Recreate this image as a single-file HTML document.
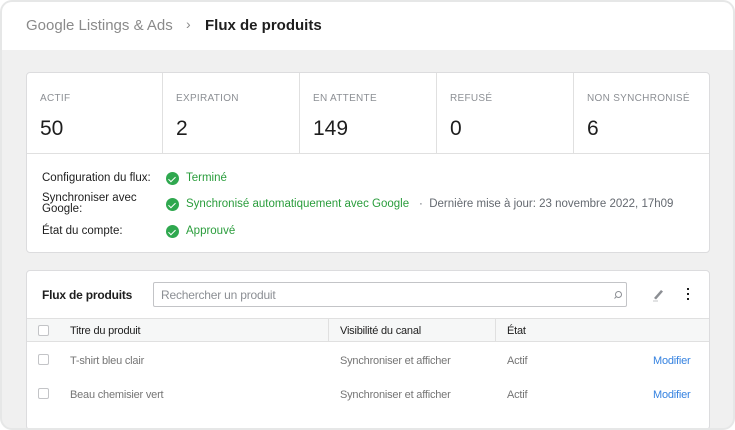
<!DOCTYPE html>
<html><head><meta charset="utf-8"><style>
*{box-sizing:border-box;margin:0;padding:0}
body{width:735px;height:416px;overflow:hidden;background:#fff;font-family:"Liberation Sans",sans-serif;color:#1e1e1e;position:relative}
.frame{position:absolute;left:0;top:0;width:735px;height:430px;border:2px solid #e6e7e7;border-radius:12px;background:#f0f0f0;overflow:hidden}
.hdr{position:absolute;left:0;top:0;right:0;height:48px;background:#fff}
.abs{position:absolute;white-space:nowrap}
.card{position:absolute;left:24px;width:684px;background:#fff;border:1px solid #dcdcde;border-radius:4px}
.lbl{font-size:10px;color:#8c8f94;letter-spacing:.3px}
.num{font-size:21px;color:#1e1e1e}
.vd{position:absolute;top:0;height:80px;width:1px;background:#e0e0e0}
.k{font-size:11.5px;color:#1e1e1e}
.g{font-size:11.5px;color:#2a9d3c}
.chk{position:absolute;width:13px;height:13px;border-radius:50%;background:#2fa84f}
.chk:after{content:"";position:absolute;left:4px;top:2.5px;width:3px;height:6px;border:solid #fff;border-width:0 1.6px 1.6px 0;transform:rotate(45deg)}
.t{font-size:11px;letter-spacing:-.2px}
.cb{position:absolute;width:11px;height:11px;border:1px solid #c3c4c7;border-radius:2px;background:#fff}
</style></head><body>
<div class="frame">
<div class="hdr">
<div class="abs" style="left:24px;top:15px;font-size:15px;color:#8a8a8a">Google Listings &amp; Ads</div>
<div class="abs" style="left:184px;top:14px;font-size:14px;color:#8a8a8a">›</div>
<div class="abs" style="left:203px;top:15px;font-size:15px;font-weight:bold;color:#1e1e1e">Flux de produits</div>
</div>
<div class="card" style="top:70px;height:181px">
<div class="vd" style="left:135px"></div><div class="vd" style="left:272px"></div><div class="vd" style="left:409px"></div><div class="vd" style="left:546px"></div>
<div class="abs" style="left:0;right:0;top:80px;height:1px;background:#e0e0e0"></div>
<div class="abs lbl" style="left:13px;top:20px">ACTIF</div><div class="abs num" style="left:13px;top:44px">50</div>
<div class="abs lbl" style="left:149px;top:20px">EXPIRATION</div><div class="abs num" style="left:149px;top:44px">2</div>
<div class="abs lbl" style="left:286px;top:20px">EN ATTENTE</div><div class="abs num" style="left:286px;top:44px">149</div>
<div class="abs lbl" style="left:423px;top:20px">REFUSÉ</div><div class="abs num" style="left:423px;top:44px">0</div>
<div class="abs lbl" style="left:560px;top:20px">NON SYNCHRONISÉ</div><div class="abs num" style="left:560px;top:44px">6</div>
<div class="abs k" style="left:15px;top:99px">Configuration du flux:</div>
<div class="chk" style="left:139px;top:99px"></div><div class="abs g" style="left:159px;top:99px">Terminé</div>
<div class="abs k" style="left:15px;top:120px;line-height:11px">Synchroniser avec<br>Google:</div>
<div class="chk" style="left:139px;top:125px"></div><div class="abs g" style="left:159px;top:125px">Synchronisé automatiquement avec Google</div>
<div class="abs" style="left:392px;top:125px;font-size:11.5px;color:#646970">·&nbsp; Dernière mise à jour: 23 novembre 2022, 17h09</div>
<div class="abs k" style="left:15px;top:152px">État du compte:</div>
<div class="chk" style="left:139px;top:152px"></div><div class="abs g" style="left:159px;top:152px">Approuvé</div>
</div>
<div class="card" style="top:268px;height:160px">
<div class="abs t" style="left:15px;top:17px;font-size:12px;font-weight:bold">Flux de produits</div>
<div class="abs" style="left:126px;top:11px;width:474px;height:25px;border:1px solid #c3c4c7;border-radius:2px"></div>
<div class="abs t" style="left:134px;top:17px;font-size:12px;color:#8c8f94">Rechercher un produit</div>
<svg class="abs" style="left:586px;top:19px" width="10" height="10" viewBox="0 0 10 10"><circle cx="5.5" cy="4.5" r="3" fill="none" stroke="#8c8f94" stroke-width="1"/><path d="M3.3 6.7L1.5 8.5" stroke="#8c8f94" stroke-width="1"/></svg>
<svg class="abs" style="left:624px;top:16px" width="14" height="16" viewBox="0 0 14 16"><path d="M3 11L10 3l2 1.5L5 12.5z" fill="#8c8f94"/><path d="M2 14h5" stroke="#c3c4c7" stroke-width="1"/></svg>
<div class="abs" style="left:660px;top:17px;width:2px;height:2px;background:#1e1e1e;box-shadow:0 5px 0 #1e1e1e,0 10px 0 #1e1e1e"></div>
<div class="abs" style="left:0;right:0;top:47px;height:24px;background:#f6f7f7;border-top:1px solid #e0e0e0;border-bottom:1px solid #e0e0e0"></div>
<div class="abs" style="left:301px;top:47px;width:1px;height:24px;background:#e0e0e0"></div>
<div class="abs" style="left:468px;top:47px;width:1px;height:24px;background:#e0e0e0"></div>
<div class="cb" style="left:11px;top:54px"></div>
<div class="abs t" style="left:43px;top:54px">Titre du produit</div>
<div class="abs t" style="left:313px;top:54px">Visibilité du canal</div>
<div class="abs t" style="left:480px;top:54px">État</div>
<div class="cb" style="left:11px;top:83px"></div>
<div class="abs t" style="left:43px;top:84px;color:#757575">T-shirt bleu clair</div>
<div class="abs t" style="left:313px;top:84px;color:#757575">Synchroniser et afficher</div>
<div class="abs t" style="left:480px;top:84px;color:#757575">Actif</div>
<div class="abs t" style="left:626px;top:84px;color:#3582e0">Modifier</div>
<div class="cb" style="left:11px;top:117px"></div>
<div class="abs t" style="left:43px;top:118px;color:#757575">Beau chemisier vert</div>
<div class="abs t" style="left:313px;top:118px;color:#757575">Synchroniser et afficher</div>
<div class="abs t" style="left:480px;top:118px;color:#757575">Actif</div>
<div class="abs t" style="left:626px;top:118px;color:#3582e0">Modifier</div>
</div>
</div>
</body></html>
